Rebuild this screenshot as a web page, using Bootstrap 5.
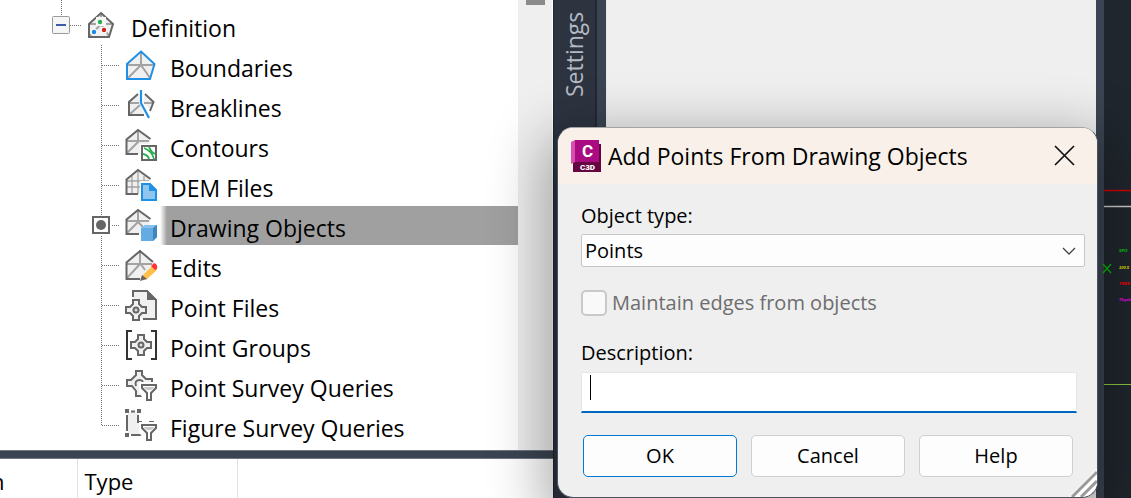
<!DOCTYPE html>
<html lang="en">
<head>
<meta charset="utf-8">
<meta name="viewport" content="width=device-width, initial-scale=1">
<title>Add Points From Drawing Objects</title>
<link href="https://cdn.jsdelivr.net/npm/bootstrap@5.3.0/dist/css/bootstrap.min.css" rel="stylesheet">
<style>
body{font-family:"Open Sans","Noto Sans",sans-serif;font-size:23px;line-height:40px;color:#000;background:#fff}
.workspace{display:grid;grid-template-columns:minmax(0,553fr) 44px 10px minmax(0,489fr) 8px 27px;height:100vh;overflow:hidden}
.tree-area{padding-top:8px;height:450px}
.tree-area svg,.canvas-view svg,.dialog-box svg{display:block;overflow:visible;flex:none}
.root-row{padding-left:52px;height:40px}
.root-name{padding-left:13px}
.node-row{padding-left:92px;height:40px}
.node-name{height:39px;margin-left:2px;padding-left:10px;white-space:nowrap}
.node-name.picked{background:linear-gradient(90deg,#fff,#a0a0a0 7px);align-self:flex-start;margin-top:-2px;padding-top:2px}
.toggle{border:0;padding:0;background:none;line-height:0}
.scroll-track{width:35px;background:#efefef;border-right:1px solid #fff}
.scroll-thumb{width:19px;height:5px;background:#8a8a8a;margin-left:8px}
.splitter{height:9px;background:#3b4452;border:1px solid #6f7680;border-width:1px 0}
.list-head{height:39px;table-layout:fixed;font-size:22px}
.list-head th{font-weight:400;padding:0 0 0 7px;line-height:44px;border-right:1px solid #e2e2e2;overflow:hidden;vertical-align:top}
.list-head th:last-child{border:0}
.list-head th.cut{direction:rtl;padding:0 72px 0 0}
.tab-strip{background:#2d3440;border-left:1px solid #20262f;border-right:2px solid #222933}
.tab-name{writing-mode:vertical-rl;transform:rotate(180deg);color:#b4bac4;line-height:40px;background:none;border:0;padding:0;height:109px;text-align:center}
.strip{background:#3b4452;border-right:1px solid #e9e9e9}
.panel-area{background:#efefef}
.edge{background:#3b4452}
.canvas-view{background:#1f262d}
.canvas-view text{font:bold italic 4px "Liberation Sans",sans-serif}
.dialog-box{position:absolute;top:127px;right:33px;width:541px;border:1px solid #a4a4a4;border-color:#a4a4a4 #4b5360 #4b5360;border-radius:16px;background:#efefef;overflow:hidden;line-height:30px;font-size:20px}
.dialog-shade{position:absolute;top:127px;right:33px;width:541px;height:371px;border-radius:16px;box-shadow:0 20px 56px 14px rgba(0,0,0,.32)}
.title-bar{background:#f9f1e9;height:56px;padding:0 19px 0 12px}
.title-bar h1{font-size:23px;font-weight:400;margin:0 0 0 6px;line-height:56px;white-space:nowrap}
.close-btn{border:0;background:none;padding:0;width:26px;height:26px}
.dialog-main{padding:17px 12px 20px 23px}
.dialog-box .form-select{height:33px;padding:0 36px 0 3px;margin-top:3px;font-size:20px;line-height:30px;color:#000;border:1px solid #c6c6c6;border-radius:2px;background-color:#fdfdfd;background-size:16px 16px;background-position:right 7px center;background-image:url("data:image/svg+xml,%3Csvg xmlns='http://www.w3.org/2000/svg' viewBox='0 0 16 16'%3E%3Cpath d='M2 5l6 6 6-6' fill='none' stroke='%23444' stroke-width='1.3'/%3E%3C/svg%3E")}
.edge-opt{margin:21px 0 20px;color:#6d6d6d}
.dialog-box .form-check-input{width:26px;height:26px;margin:2px 5px 2px 0;border:2px solid #c9c9c9;border-radius:5px;background:#f9f9f9;float:none;opacity:1}
.desc-input{width:calc(100% - 8px);height:41px;margin-top:4px;border:1px solid #e2e6ea;border-bottom:2px solid #0067c0;border-radius:0;padding:0 8px;display:block;background:#fff;outline:0;caret-color:#000}
.caret-box{position:relative}
.caret-mark{position:absolute;left:9px;top:3px;width:1px;height:25px;background:#000}
.actions{gap:14px;margin:22px 12px 0 2px}
.actions .btn{flex:1 1 0;height:42px;padding:0;font-size:20px;line-height:40px;color:#000;background:#fdfdfd;border:1px solid #cfcfcf;border-radius:5px}
.actions .btn.main-act{border-color:#0078d4}
.grip{position:absolute;right:0;bottom:0}
.g{fill:none;stroke:#666;stroke-width:2}
.gl{fill:none;stroke:#a3a3a3;stroke-width:2}
.dots{fill:none;stroke:#777;stroke-width:1;stroke-dasharray:1 1;shape-rendering:crispEdges}
</style>
</head>
<body>
<svg width="0" height="0" class="position-absolute" aria-hidden="true">
<defs>
<g id="link"><path class="dots" d="M9.500 0V40M10 17.500H28"/></g>
<g id="house"><path d="M2 11L14 2L26 11V17H17V26H2Z" fill="#f0f0f0"/></g>
<g id="target"><path d="M-3-10H3V-6L6-3H10V3H6L3 6V10H-3V6L-6 3H-10V-3H-6L-3-6Z" fill="#f0f0f0" stroke="#666" stroke-width="2"/><circle r="2.500" fill="#ddd" stroke="#666" stroke-width="2"/></g>
<g id="funnel"><path d="M15 14H35V24L29 34H21L15 24Z" fill="#fff"/><path d="M18 17H32V20L27 25V32H23V25L18 20Z" fill="#fff" stroke="#666" stroke-width="2"/><path d="M19 19H31L27 22H23Z" fill="#c8c8c8"/></g>
</defs>
</svg>
<main class="workspace">
  <section class="d-flex flex-column">
    <div class="d-flex">
      <div class="tree-area flex-grow-1">
        <div class="root-row d-flex">
          <button class="toggle" aria-label="Collapse Definition"><svg width="32" height="40"><path class="dots" d="M9.500-8V8M18 17.500H30"/><rect x=".5" y="8.500" width="17" height="17" rx="1" fill="#f5f5f5" stroke="#999"/><path d="M4 17H14" stroke="#3d5ba9" stroke-width="2"/></svg></button>
          <svg width="34" height="40"><path d="M17 5L29 16L25 29H5V16Z" fill="#f0f0f0"/><path class="gl" d="M5 16H29M17 5V16L6 28M17 16L25 28"/><path class="g" d="M17 5L29 16L25 29H5V16Z"/><rect x="12" y="9" width="10" height="9" fill="#f7f7f7"/><circle cx="10" cy="24" r="3.500" fill="#f7f7f7"/><circle cx="20" cy="22" r="3.500" fill="#f7f7f7"/><circle cx="16" cy="14" r="2.200" fill="#22b14c"/><circle cx="10" cy="24" r="2.200" fill="#1e88e5"/><circle cx="20" cy="22" r="2.200" fill="#d32020"/></svg>
          <span class="root-name">Definition</span>
        </div>
        <ul class="list-unstyled m-0">
          <li class="node-row d-flex"><svg width="32" height="40"><path class="dots" d="M9.500-3V40M10 17.500H28"/></svg><svg width="34" height="40"><path d="M17 3L31 16L26 31H3V16Z" fill="#f0f0f0"/><path class="gl" d="M3 17H31M17 3V17L4 30M17 17L26 30"/><path d="M17 3.500L30.500 16L26 31H3V16Z" fill="none" stroke="#1e90e6" stroke-width="2"/></svg><span class="node-name flex-grow-1">Boundaries</span></li>
          <li class="node-row d-flex"><svg width="32" height="40"><use href="#link"/></svg><svg width="34" height="40"><path d="M14 6L5 14V27H20L17 16ZM21 6L30 14L27 22L19 15Z" fill="#f0f0f0"/><path class="gl" d="M5 15H15M16 17L6 26M20 15H29"/><path class="g" d="M14 6L5 14V27H20M21 6L29.500 14L26 23"/><path d="M17 2V15L25 30" fill="none" stroke="#1e90e6" stroke-width="2.200"/></svg><span class="node-name flex-grow-1">Breaklines</span></li>
          <li class="node-row d-flex"><svg width="32" height="40"><use href="#link"/></svg><svg width="34" height="40"><use href="#house"/><path class="gl" d="M2 13H25M14 2V14L3 25"/><path class="g" d="M26.500 11L14 2L2.500 11.500V26H14"/><rect x="16" y="16" width="18" height="18" fill="#fff"/><rect x="18" y="18" width="14" height="14" fill="#fff" stroke="#666" stroke-width="2"/><path d="M19 26Q24 27 25 31M20 20Q28 23 30 31M25 19Q27 24 31 26" fill="none" stroke="#22b14c" stroke-width="1.800"/></svg><span class="node-name flex-grow-1">Contours</span></li>
          <li class="node-row d-flex"><svg width="32" height="40"><use href="#link"/></svg><svg width="34" height="40"><use href="#house"/><path d="M2 13H25M2 19H16M8 8V26M14 2V26M20 8V14" fill="none" stroke="#a3a3a3" stroke-width="1.300"/><path class="g" d="M26.500 11L14 2L2.500 11.500V26H14"/><path d="M16 13H28V36H16Z" fill="#fff"/><path d="M18 16H26L32 22V32H18Z" fill="#90c5ee" stroke="#1e90e6" stroke-width="2"/><path d="M25 15L33 23H25Z" fill="#1e90e6"/></svg><span class="node-name flex-grow-1">DEM Files</span></li>
          <li class="node-row d-flex" aria-selected="true"><button class="toggle" aria-label="Expand Drawing Objects"><svg width="32" height="40"><use href="#link"/><rect x="-1" y="7" width="20" height="20" fill="#fff"/><rect x="1" y="9" width="16" height="16" fill="#fff" stroke="#666" stroke-width="2"/><circle cx="9" cy="17" r="5" fill="#666"/></svg></button><svg width="34" height="40"><use href="#house"/><path class="gl" d="M2 13H25M14 2V14L3 25M14 14L20 20"/><path class="g" d="M26.500 11L14 2L2.500 11.500V26H15"/><path d="M17 20L21 17H33V29L29 33H17Z" fill="#62abe3"/><path d="M17 20L21 17H33L29 20Z" fill="#84c1ef"/><path d="M29 20L33 17V29L29 33Z" fill="#3e87be"/></svg><span class="node-name picked flex-grow-1">Drawing Objects</span></li>
          <li class="node-row d-flex"><svg width="32" height="40"><use href="#link"/></svg><svg width="34" height="40"><path d="M16 2L30 14L18 31H2V14Z" fill="#f0f0f0"/><path class="gl" d="M2 16H28M16 2V16L3 30M16 15L21 22"/><path class="g" d="M29 14L16 3L2.500 14.500V31H16"/><path d="M18 28L28 18L33 22L22 32Z" fill="#ffc04c"/><path d="M27 18L30 15Q34 16 33 21L31 22Z" fill="#f33"/><path d="M16 33L18 27L23 31Z" fill="#666"/></svg><span class="node-name flex-grow-1">Edits</span></li>
          <li class="node-row d-flex"><svg width="32" height="40"><use href="#link"/></svg><svg width="34" height="40"><path d="M9 3H24L32 11V31H18L9 20Z" fill="#f0f0f0"/><path class="g" d="M9 9V3H23L32 12V31H19"/><path d="M23 2L33 12H23Z" fill="#666"/><use href="#target" x="12" y="22"/></svg><span class="node-name flex-grow-1">Point Files</span></li>
          <li class="node-row d-flex"><svg width="32" height="40"><use href="#link"/></svg><svg width="34" height="40"><path d="M8 3H3V31H8M27 3H32V31H27" fill="none" stroke="#333" stroke-width="2"/><use href="#target" x="17" y="17"/></svg><span class="node-name flex-grow-1">Point Groups</span></li>
          <li class="node-row d-flex"><svg width="32" height="40"><use href="#link"/></svg><svg width="34" height="40"><path d="M12 3H18V7L22 11H28V16L18 24V28H12V23L8 18H3V12H7L12 7Z" fill="#f0f0f0" stroke="#666" stroke-width="2"/><path class="g" d="M12 18Q10 12 16 12Q18 12 19 14"/><use href="#funnel"/></svg><span class="node-name flex-grow-1">Point Survey Queries</span></li>
          <li class="node-row d-flex"><svg width="32" height="40"><path class="dots" d="M9.500 0V17.500H28"/></svg><svg width="34" height="40"><path d="M4 4H15V15H20V26H4Z" fill="#f0f0f0"/><path d="M1 1h4v4h-4zM13 1h4v4h-4zM1 25h4v4h-4z" fill="#666"/><path class="g" d="M7 3.500H11M3 7V23M7 27H18M14 7V15M15 14H18M25 14H30" stroke-dasharray="16 2"/><use href="#funnel"/></svg><span class="node-name flex-grow-1">Figure Survey Queries</span></li>
        </ul>
      </div>
      <div class="scroll-track"><div class="scroll-thumb"></div></div>
    </div>
    <div class="splitter flex-shrink-0"></div>
    <table class="list-head w-100">
      <colgroup><col style="width:77px"><col style="width:160px"><col></colgroup>
      <thead><tr><th class="cut">Description</th><th>Type</th><th></th></tr></thead>
    </table>
  </section>
  <div class="tab-strip"><button class="tab-name">Settings</button></div>
  <div class="strip"></div>
  <div class="panel-area"></div>
  <div class="edge"></div>
  <div class="canvas-view"><svg width="27" height="498"><path d="M0 190.500H27" stroke="#d00000" stroke-width="1.500"/><path d="M0 206.500H27" stroke="#ccc" stroke-width="1.500"/><path d="M0 384.500H27" stroke="#8cc63f"/><path d="M-1 264L7 273M-1 273L7 264" stroke="#0b0" stroke-width="1.300"/><text x="15" y="252" fill="#0d0">SPO</text><text x="15" y="269" fill="#ee0">100.5</text><text x="15" y="285" fill="#f00">TREE</text><text x="15" y="301" fill="#f0f">Thyolo</text></svg></div>
</main>
<div class="dialog-shade"></div>
<form class="dialog-box" role="dialog" aria-labelledby="dlg-title">
  <header class="title-bar d-flex align-items-center">
    <svg width="32" height="34" viewBox="0 0 32 34"><path d="M29 5H31V33H3V23H29Z" fill="#650541"/><path d="M1 3L5 1V23L1 25Z" fill="#da4db0"/><path d="M5 1H29V23H5Z" fill="#ab0b80"/><text x="17.500" y="18" text-anchor="middle" font-family="Roboto,sans-serif" font-weight="700" font-size="17" fill="#fff">C</text><text x="17.500" y="31" text-anchor="middle" font-family="Roboto,sans-serif" font-weight="900" font-size="8" fill="#fff">C3D</text></svg>
    <h1 id="dlg-title" class="flex-grow-1">Add Points From Drawing Objects</h1>
    <button type="button" class="close-btn" aria-label="Close"><svg width="26" height="26"><path d="M3 3L22 22M22 3L3 22" stroke="#111" stroke-width="1.700"/></svg></button>
  </header>
  <div class="dialog-main">
    <label class="d-block" for="otype">Object type:</label>
    <select class="form-select" id="otype"><option>Points</option></select>
    <div class="edge-opt d-flex"><input class="form-check-input" type="checkbox" id="edges" disabled><label for="edges">Maintain edges from objects</label></div>
    <label class="d-block" for="desc">Description:</label>
    <div class="caret-box"><input class="desc-input" type="text" id="desc"><span class="caret-mark"></span></div>
    <div class="actions d-flex"><button type="submit" class="btn main-act">OK</button><button type="button" class="btn">Cancel</button><button type="button" class="btn">Help</button></div>
  </div>
  <svg class="grip" width="28" height="28"><path d="M0 28L28 0V28Z" fill="#fff"/><path d="M3 28L28 3M12 28L28 12M21 28L28 21" stroke="#999" stroke-width="3"/></svg>
</form>
<script src="https://cdn.jsdelivr.net/npm/bootstrap@5.3.0/dist/js/bootstrap.bundle.min.js"></script>
</body>
</html>
